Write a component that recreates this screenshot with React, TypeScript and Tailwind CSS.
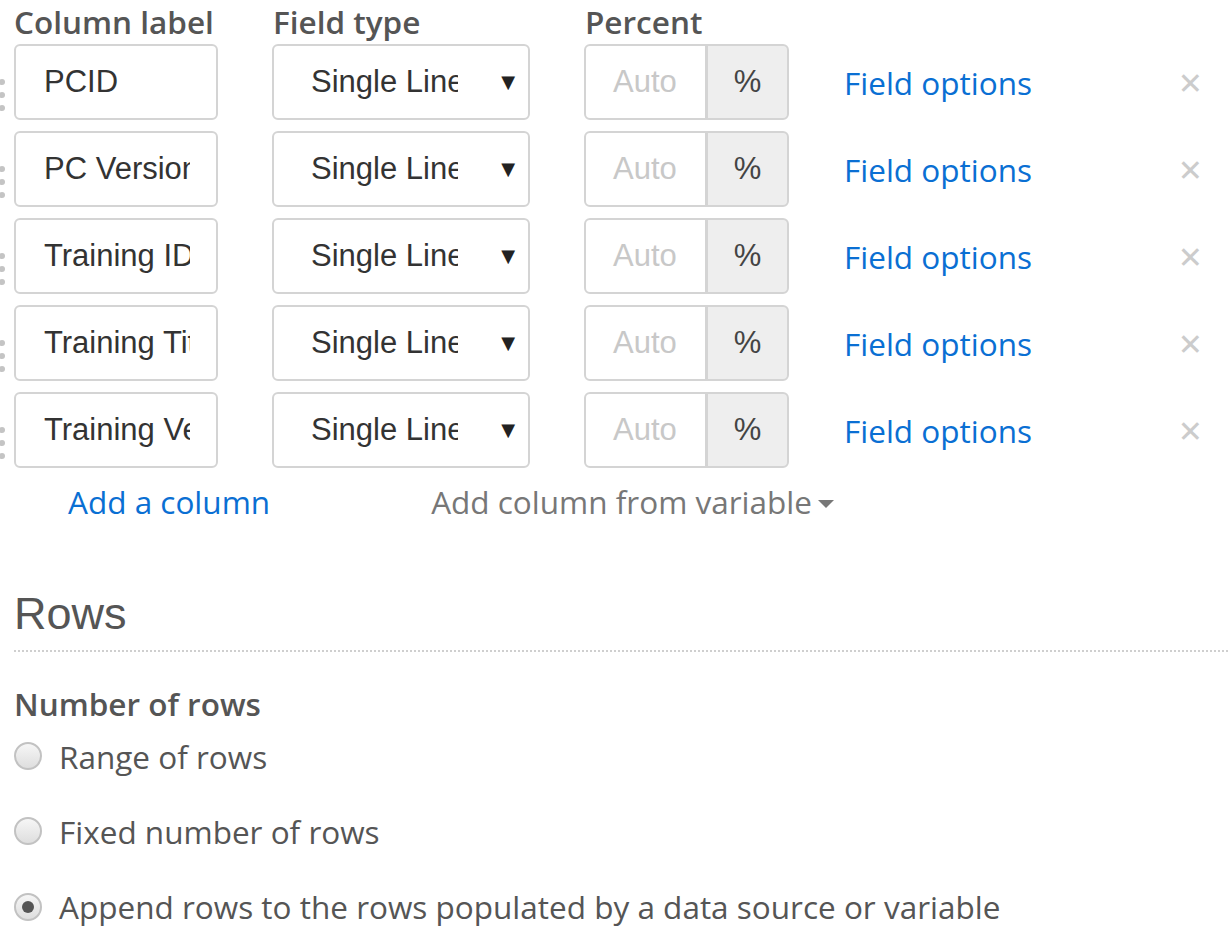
import React from "react";

const rows = ["PCID", "PC Version", "Training ID", "Training Title", "Training Version"];

const arial = { fontFamily: '"Liberation Sans", Arial, sans-serif' };

function Handle() {
  return (
    <div className="absolute left-[-1px] top-[35px] flex flex-col gap-[7px]">
      <span className="block h-[6px] w-[6px] rounded-full bg-[#c4c4c4]" />
      <span className="block h-[6px] w-[6px] rounded-full bg-[#c4c4c4]" />
      <span className="block h-[6px] w-[6px] rounded-full bg-[#c4c4c4]" />
    </div>
  );
}

function Row({ label }: { label: string }) {
  return (
    <div className="relative flex h-[76px] items-center">
      <Handle />
      <div className="ml-[14px] flex h-[76px] w-[204px] items-center overflow-hidden rounded-[6px] border-2 border-[#d4d4d4] pl-[28px] pr-[26px]">
        <span className="block overflow-hidden whitespace-nowrap text-[31px] text-[#333]" style={arial}>
          {label}
        </span>
      </div>
      <div className="ml-[54px] flex h-[76px] w-[258px] items-center rounded-[6px] border-2 border-[#d4d4d4] pl-[37px] pr-[13px]">
        <span className="block w-[147px] overflow-hidden whitespace-nowrap text-[31px] text-[#333]" style={arial}>
          Single Line Text
        </span>
        <span className="ml-auto text-[18px] leading-none text-[#222]" style={{ fontFamily: '"DejaVu Sans", sans-serif' }}>▼</span>
      </div>
      <div className="ml-[54px] flex h-[76px]">
        <div className="flex w-[123px] items-center rounded-l-[6px] border-2 border-[#d4d4d4] pl-[27px]">
          <span className="text-[31px] text-[#c8c8c8]" style={arial}>Auto</span>
        </div>
        <div className="ml-[-1px] flex w-[83px] items-center justify-center rounded-r-[6px] border-2 border-[#d4d4d4] bg-[#eeeeee]">
          <span className="text-[31px] text-[#444]" style={arial}>%</span>
        </div>
      </div>
      <a className="ml-[55px] mt-[2px] text-[31.5px] text-[#0a6fd3]">Field options</a>
      <span className="ml-auto mr-[25px] mt-[3px] text-[30px] font-bold leading-none text-[#cccccc]" style={{ fontFamily: '"DejaVu Sans", sans-serif' }}>✕</span>
    </div>
  );
}

function Radio({ checked, label }: { checked?: boolean; label: string }) {
  return (
    <div className="flex items-center">
      <span className="ml-[14px] flex h-[28px] w-[28px] items-center justify-center rounded-full border-2 border-[#c2c2c2] bg-gradient-to-b from-[#f6f6f6] to-[#dedede]">
        {checked && <span className="block h-[12px] w-[12px] rounded-full bg-[#555]" />}
      </span>
      <span className="ml-[17px] text-[31.5px] text-[#555]">{label}</span>
    </div>
  );
}

export default function App() {
  return (
    <div className="h-[944px] w-[1228px] overflow-hidden bg-white" style={{ fontFamily: '"Open Sans", sans-serif' }}>
      <div className="flex h-[44px] items-start text-[31.5px] font-semibold leading-[44px] text-[#555]">
        <span className="ml-[14px] w-[259px]">Column label</span>
        <span className="w-[312px]">Field type</span>
        <span>Percent</span>
      </div>
      <div className="flex flex-col gap-[11px]">
        {rows.map((r) => (
          <Row key={r} label={r} />
        ))}
      </div>
      <div className="mt-[10px] flex items-center text-[31.5px]">
        <a className="ml-[68px] text-[#0a6fd3]">Add a column</a>
        <span className="ml-[161px] flex items-center text-[#777]">
          Add column from variable
          <span className="ml-[6px] mt-[4px] inline-block h-0 w-0 border-x-[8px] border-t-[8px] border-x-transparent border-t-[#777]" />
        </span>
      </div>
      <div className="ml-[14px] mt-[59px] text-[45px] leading-[60px] text-[#555]" style={arial}>
        Rows
      </div>
      <div className="ml-[14px] mt-[6px] border-t-2 border-dotted border-[#cfcfcf]" />
      <div className="ml-[14px] mt-[28px] text-[31.5px] font-semibold text-[#555]">Number of rows</div>
      <div className="mt-[5px] flex flex-col gap-[28px]">
        <Radio label="Range of rows" />
        <Radio label="Fixed number of rows" />
        <Radio checked label="Append rows to the rows populated by a data source or variable" />
      </div>
    </div>
  );
}
